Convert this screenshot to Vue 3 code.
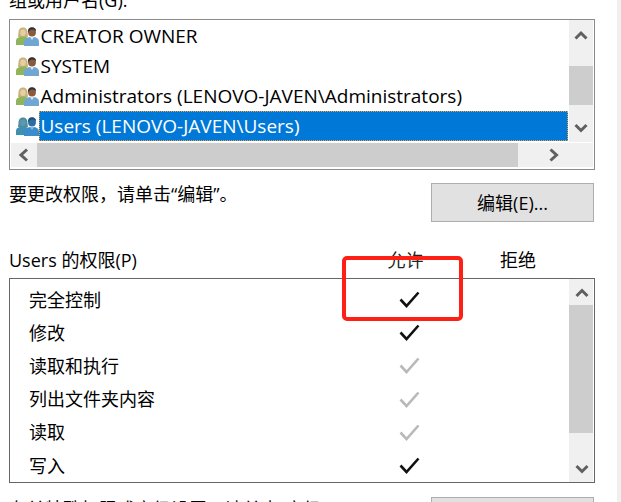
<script setup>
const normal = { fHair: '#c9b27a', fSkin: '#e6cfa6', fBody: '#8fb55a', mHair: '#2e3136', mSkin: '#8a5a3a', mBody: '#6fa6d2', collar: '#dfeaf3' }
const picked = { fHair: '#4f8ea0', fSkin: '#5f98ac', fBody: '#3f90b0', mHair: '#1b4f7e', mSkin: '#2d6da0', mBody: '#3a8ccb', collar: '#8fc0e0' }
const users = [
  { name: 'CREATOR OWNER', c: normal },
  { name: 'SYSTEM', c: normal },
  { name: 'Administrators (LENOVO-JAVEN\\Administrators)', c: normal },
  { name: 'Users (LENOVO-JAVEN\\Users)', c: picked, selected: true }
]
const perms = [
  { name: '完全控制', state: 'on' },
  { name: '修改', state: 'on' },
  { name: '读取和执行', state: 'off' },
  { name: '列出文件夹内容', state: 'off' },
  { name: '读取', state: 'off' },
  { name: '写入', state: 'on' }
]
</script>

<template>
  <div class="page">
    <div class="main">
      <div class="top-label"><span>组或用户名(G):</span></div>

      <div class="list-box">
        <div class="list-rows">
          <div v-for="u in users" :key="u.name" class="user-row" :class="{ selected: u.selected }">
            <svg class="user-icon" width="23" height="19" viewBox="0 0 23 19">
              <path d="M2.500 6c0-4 2-5.500 4.500-5.500s4.500 1.500 4.500 5.500l.5 4H2z" :fill="u.c.fHair" />
              <ellipse cx="7" cy="5.800" rx="2.700" ry="3.300" :fill="u.c.fSkin" />
              <path d="M0 18v-4c0-3 3-4.500 7-4.500s6 1.500 6 4.500v4z" :fill="u.c.fBody" />
              <circle cx="16" cy="5.500" r="3.900" :fill="u.c.mSkin" />
              <path d="M12 5.500C11.500 2 13.500.300 16 .300s4.500 1.700 4 4.200c-1-1.500-2-2-4-2s-3 1.500-4 3z" :fill="u.c.mHair" />
              <path d="M8 19v-4c0-3 3-5 8-5s7 2 7 5v4z" :fill="u.c.mBody" />
              <path d="M14 10h4l-2 3z" :fill="u.c.collar" />
            </svg>
            <span class="user-name">{{ u.name }}</span>
          </div>
        </div>
        <div class="vbar">
          <svg class="arrow" width="24" height="46" viewBox="0 0 24 46"><path d="M6.500 18.500 12 13l5.500 5.500" fill="none" stroke="#606060" stroke-width="3" /></svg>
          <div class="vbar-thumb"></div>
          <svg class="arrow" width="24" height="35" viewBox="0 0 24 35"><path d="M6.500 20 12 25.500 17.500 20" fill="none" stroke="#606060" stroke-width="3" /></svg>
        </div>
        <div class="hbar">
          <svg width="26" height="24" viewBox="0 0 26 24"><path d="M16 6.500 10 12l6 5.500" fill="none" stroke="#606060" stroke-width="3" /></svg>
          <div class="hbar-thumb"></div>
          <svg class="hbar-right" width="74" height="24" viewBox="0 0 74 24"><path d="m32.500 6.500 6 5.500-6 5.500" fill="none" stroke="#606060" stroke-width="3" /></svg>
        </div>
      </div>

      <div class="edit-row">
        <span>要更改权限，请单击“编辑”。</span>
        <div class="btn">编辑(E)...</div>
      </div>

      <div class="perm-head">
        <span class="perm-title">Users 的权限(P)</span>
        <span class="col-allow">允许</span>
        <span class="col-deny">拒绝</span>
      </div>

      <div class="perm-box">
        <div class="perm-rows">
          <div v-for="p in perms" :key="p.name" class="perm-row">
            <span class="perm-name">{{ p.name }}</span>
            <svg class="check" width="22" height="18" viewBox="0 0 22 18">
              <path d="M2.500 8.500 8.500 15 20.500 1.500" fill="none" :stroke="p.state === 'on' ? '#111' : '#b9b9b9'" stroke-width="2.600" />
            </svg>
          </div>
        </div>
        <div class="pbar">
          <svg width="24" height="26" viewBox="0 0 24 26"><path d="M7.500 17 13 11.500l5.500 5.500" fill="none" stroke="#606060" stroke-width="3" /></svg>
          <div class="pbar-thumb"></div>
          <svg width="24" height="49" viewBox="0 0 24 49"><path d="M7.500 33 13 38.500l5.500-5.500" fill="none" stroke="#606060" stroke-width="3" /></svg>
        </div>
      </div>

      <div class="bottom-row">
        <span>有关特殊权限或高级设置，请单击“高级”。</span>
        <div class="btn btn-clipped"></div>
      </div>
    </div>
    <div class="edge"></div>
    <div class="annotation"></div>
  </div>
</template>

<style>
html, body { margin: 0; background: #fff; }
</style>

<style scoped>
.page {
  position: relative;
  display: flex;
  width: 621px;
  height: 502px;
  overflow: hidden;
  background: #fff;
  color: #000;
  font-family: "Open Sans", "Noto Sans CJK SC", sans-serif;
  font-size: 18px;
}
.main {
  width: 617px;
  flex: none;
  padding-left: 9px;
  box-sizing: border-box;
}
.edge {
  flex: 1;
  background: #f0f0f0;
}
.top-label {
  height: 19px;
  overflow: hidden;
  line-height: 24px;
}
.top-label span {
  display: block;
  margin-top: -12px;
}
.list-box {
  width: 586px;
  height: 151px;
  box-sizing: border-box;
  border: 1.500px solid #8a8a8a;
  display: grid;
  grid-template-columns: 1fr 25px;
  grid-template-rows: 122px 1fr;
}
.list-rows {
  padding-top: 1px;
}
.user-row {
  height: 30px;
  display: flex;
  align-items: center;
  padding-left: 5.500px;
  font-size: 19px;
}
.user-icon {
  flex: none;
}
.user-name {
  padding: 0 2px;
  line-height: 30px;
  margin-top: -1px;
}
.user-row.selected .user-name {
  flex: 1;
  margin: 0 1px 0 0;
  background: #0078d7;
  color: #fff;
  outline: 1px dotted #f0a030;
  outline-offset: -1px;
}
.vbar {
  background: #f0f0f0;
  display: flex;
  flex-direction: column;
  margin-right: 1px;
}
.vbar-thumb {
  height: 39px;
  background: #cdcdcd;
}
.arrow { display: block; flex: none; }
.hbar {
  grid-column: 1 / 3;
  margin: 1px;
  background: #f0f0f0;
  display: flex;
  height: 24px;
}
.hbar-thumb {
  width: 481px;
  background: #cdcdcd;
}
.edit-row {
  width: 585px;
  height: 52px;
  margin-top: 13px;
  display: flex;
  justify-content: space-between;
  align-items: flex-start;
  line-height: 24px;
}
.btn {
  width: 163px;
  height: 39px;
  box-sizing: border-box;
  background: #e1e1e1;
  border: 1.500px solid #adadad;
  display: flex;
  align-items: center;
  justify-content: center;
}
.edit-row > span { margin-top: -1px; }
.perm-head {
  height: 43px;
  width: 585px;
  line-height: 24px;
  padding-top: 13px;
  box-sizing: border-box;
  display: grid;
  grid-template-columns: 367px 60px 1fr;
}
.col-allow { justify-self: center; color: #222; text-align: center; width: 40px; margin-left: -1px; }
.col-deny { justify-self: start; margin-left: 64px; }
.perm-box {
  width: 586px;
  height: 205px;
  box-sizing: border-box;
  border: 1.500px solid #666;
  display: flex;
}
.perm-rows {
  flex: 1;
  padding-top: 3px;
}
.perm-row {
  height: 33.200px;
  position: relative;
  display: flex;
  align-items: center;
  padding-left: 19px;
}
.perm-name { flex: 1; }
.check {
  position: absolute;
  left: 388px;
  top: 9px;
}
.pbar {
  width: 24px;
  margin-right: 1px;
  background: #f0f0f0;
  display: flex;
  flex-direction: column;
  flex: none;
}
.pbar svg { display: block; flex: none; }
.pbar-thumb {
  height: 128px;
  background: #cdcdcd;
}
.bottom-row {
  width: 585px;
  margin-top: 14px;
  display: flex;
  justify-content: space-between;
  line-height: 24px;
}
.btn-clipped { flex: none; margin-top: 0; }
.annotation {
  position: absolute;
  left: 342px;
  top: 256px;
  width: 121px;
  height: 65px;
  box-sizing: border-box;
  border: 4.500px solid #ff2015;
  border-radius: 5px;
}
</style>
